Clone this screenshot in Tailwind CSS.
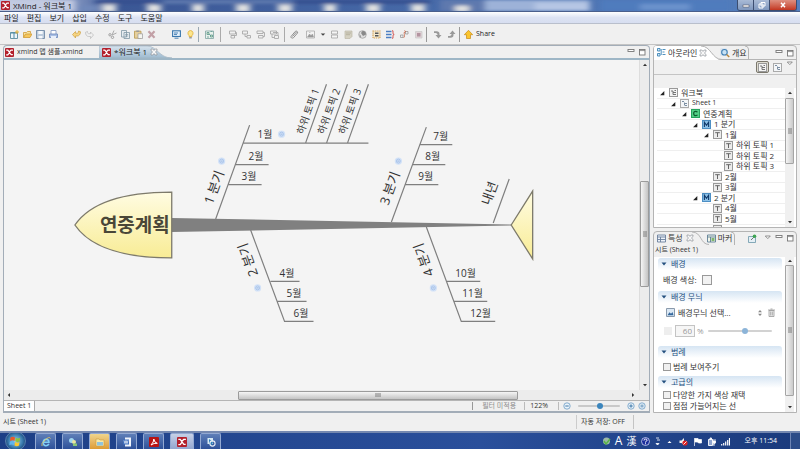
<!DOCTYPE html>
<html lang="ko">
<head>
<meta charset="utf-8">
<title>XMind - 워크북 1</title>
<script src="https://cdn.jsdelivr.net/npm/@tailwindcss/browser@4"></script>
</head>
<body class="h-screen overflow-hidden flex flex-col bg-[#f0f0f0] font-['Open_Sans','Noto_Sans_CJK_KR',sans-serif] text-[8px] leading-[10px] text-[#333] whitespace-nowrap">

<svg class="hidden" aria-hidden="true">
  <symbol id="xm" viewBox="0 0 9 9"><rect width="9" height="9" rx="1" fill="#b3202c"/><path d="M1.2 2.2h1.6L4.3 4 6 2.2h2M1.2 6.8h1.6L4.6 4.6 6.2 6.6h1.6" stroke="#fff" stroke-width="1.2" fill="none"/></symbol>
  <symbol id="close" viewBox="0 0 8 8"><path d="M1 1h1.8L4 2.4 5.2 1H7v1.2L5.6 4 7 5.8V7H5.2L4 5.6 2.8 7H1V5.8L2.4 4 1 2.2z" fill="#f8f8f8" stroke="#8a8f96" stroke-width=".7"/></symbol>
  <symbol id="min" viewBox="0 0 8 8"><rect x="1" y="1.5" width="6" height="2" fill="#fff" stroke="#777" stroke-width=".9"/></symbol>
  <symbol id="max" viewBox="0 0 8 8"><rect x="1.5" y="1.5" width="5.5" height="5.5" fill="#fff" stroke="#777" stroke-width=".9"/><path d="M1.5 2.6H7" stroke="#777" stroke-width=".8"/></symbol>
  <symbol id="menu" viewBox="0 0 8 8"><path d="M1.3 2h5L3.8 4.6z" fill="#fff" stroke="#777" stroke-width=".8"/></symbol>
  <symbol id="open" viewBox="0 0 8 8"><path d="M6.500 2.600v3.800H2.700z" fill="#222"/></symbol>
  <symbol id="topic" viewBox="0 0 9 9"><rect x=".5" y=".5" width="8" height="8" fill="#ececec" stroke="#9a9a9a"/><path d="M2.2 2.7h4.6M4.5 2.7V7" stroke="#666" stroke-width="1"/></symbol>
  <symbol id="main" viewBox="0 0 9 9"><rect x=".5" y=".5" width="8" height="8" fill="#8cc0e6" stroke="#4d8fc4"/><path d="M2.4 7V2.2l2.1 3 2.1-3V7" stroke="#123a6b" stroke-width="1.1" fill="none"/></symbol>
  <symbol id="central" viewBox="0 0 9 9"><rect x=".5" y=".5" width="8" height="8" fill="#52cf86" stroke="#25a35d"/><path d="M6.4 3.2C6 2.5 5.500 2.300 4.600 2.300 3.300 2.300 2.700 3.200 2.700 4.500s.6 2.200 1.900 2.200c.9 0 1.400-.2 1.800-.9" stroke="#0b5c2d" stroke-width="1.200" fill="none"/></symbol>
  <symbol id="book" viewBox="0 0 9 9"><rect x=".5" y=".5" width="8" height="8" fill="#f4f4f4" stroke="#999"/><path d="M2 3h2v1.500h3M4 4.500V6.500h3M5.500 2.500h1.500" stroke="#666" stroke-width=".9" fill="none"/></symbol>
  <symbol id="sheet" viewBox="0 0 9 9"><rect x=".5" y=".5" width="8" height="8" fill="#f4f6f8" stroke="#aaa"/><path d="M2 2.500h2M4.500 3.500v3M5 4.500h2M5 6.500h2" stroke="#6d8299" stroke-width=".9"/></symbol>
  <symbol id="fold" viewBox="0 0 8 8"><circle cx="4" cy="4" r="3.700" fill="#d3e2f7"/><circle cx="4" cy="4" r="2" fill="none" stroke="#9dbbe6" stroke-width=".7"/><path d="M3 4h2" stroke="#86a8da" stroke-width=".7"/></symbol>
</svg>

<!-- title bar -->
<header class="relative h-3 shrink-0 flex items-center border-b border-[#4a5f8c] bg-linear-to-r from-[#b8c2dd] from-5% via-[#3b5795] via-15% to-[#5580bf]">
  <svg class="absolute inset-0 w-full h-full" preserveAspectRatio="none" viewBox="0 0 800 12" aria-hidden="true">
    <defs><filter id="soft" x="-30%" y="-30%" width="160%" height="160%"><feGaussianBlur stdDeviation="3 1.500"/></filter></defs>
    <g filter="url(#soft)">
      <path d="M0 0h75v12H0z" fill="#c3cbe2"/><path d="M78 6h20v6H78z" fill="#7088ba"/>
      <path d="M95 0h60v4H95zM230 0h200v4H230z" fill="#344f8f"/>
      <path d="M163 0h130v4H163zM440 0h100v12H440z" fill="#5f79ae"/>
      <path d="M102 5h14v8h-14zM147 5h14v8h-14zM192 5h12v8h-12zM236 5h14v8h-14zM278 5h14v8h-14zM324 5h12v8h-12zM366 5h14v8h-14zM411 5h14v8h-14zM455 6h14v7h-14z" fill="#dfe0e0"/>
      <path d="M485 0h105v12H485z" fill="#9db2d8"/><path d="M535 3h54v8h-54z" fill="#b6c6e4"/>
      <path d="M600 0h130v12H600z" fill="#4f7bbd"/><path d="M640 4h50v7h-50z" fill="#6a92cc"/>
    </g>
  </svg>
  <div class="relative flex items-center gap-[3px] pl-px text-[#222]"><svg class="size-[9px]"><use href="#xm"/></svg><h1>XMind - 워크북 1</h1></div>
  <div class="relative ml-auto mr-[3px] h-[11px] self-start flex rounded-b-[3px] overflow-hidden border border-t-0 border-[#3c4d70]">
    <button aria-label="최소화" class="w-4 flex justify-center items-center bg-linear-to-b from-[#a9bad6] to-[#7f97be] border-r border-[#3c4d70]"><svg class="size-2" viewBox="0 0 8 8"><rect x="1" y="4" width="6" height="2" fill="#fff" stroke="#445" stroke-width=".5"/></svg></button>
    <button aria-label="이전 크기로" class="w-4 flex justify-center items-center bg-linear-to-b from-[#a9bad6] to-[#7f97be] border-r border-[#3c4d70]"><svg class="size-2" viewBox="0 0 8 8"><path d="M3 1.500h4V5H3zM1 3h4v4H1z" fill="#8fa5c9" stroke="#fff" stroke-width="1"/></svg></button>
    <button aria-label="닫기" class="w-[26px] flex justify-center items-center bg-linear-to-b from-[#dd8f80] to-[#c2341f]"><svg class="size-2" viewBox="0 0 8 8"><path d="M2 1.800l4 4.400M6 1.800L2 6.200" stroke="#fff" stroke-width="1.500"/></svg></button>
  </div>
</header>

<nav class="h-3 shrink-0 flex items-center gap-2 pl-1 border-b border-[#b9bfcc] bg-linear-to-b from-white via-[#dde3f3] via-50% to-[#d7def0] text-[#222]">
  <button>파일</button><button>편집</button><button>보기</button><button>삽입</button><button>수정</button><button>도구</button><button>도움말</button>
</nav>

<!-- toolbar -->
<div role="toolbar" class="h-[21px] shrink-0 flex items-center pl-2 border-b border-[#c4c4c4] [&_svg]:size-[9px] [&_button]:h-3 [&_button]:flex [&_button]:items-center [&_button]:justify-center">
  <div class="flex [&>button]:w-[13px]">
    <button aria-label="새로 만들기"><svg viewBox="0 0 9 9"><path d="M.5 2.500h7v6h-7z" fill="#eef5fa" stroke="#6a97a8"/><path d="M.5 3h7M4 3v5" stroke="#4e8aa3"/><path d="M7 0v4M5 2h4" stroke="#e7b43a"/></svg></button>
    <button aria-label="열기"><svg viewBox="0 0 9 9"><path d="M.5 7.500v-5h3l1-1h3v2" fill="#f9e4a0" stroke="#cf9a35" stroke-width=".8"/><path d="M.5 7.500L2.500 4H9L7 7.500z" fill="#f6c75b" stroke="#cf9a35" stroke-width=".8"/></svg></button>
    <button aria-label="저장"><svg viewBox="0 0 9 9"><path d="M.5.5h8v8h-8z" fill="#bccbdc" stroke="#7c93ad"/><path d="M2.300 1h4.400v3H2.300zM2.500 6h4v2.500h-4z" fill="#f5f8fb"/></svg></button>
    <button aria-label="인쇄"><svg viewBox="0 0 9 9"><path d="M2 4V.5h5V4" fill="#fff" stroke="#7d95c0" stroke-width=".8"/><path d="M.5 4h8v3.500h-8z" fill="#a9bfe4" stroke="#6a86ba" stroke-width=".8"/><path d="M2 6h5v2.500H2z" fill="#e9effa"/></svg></button>
  </div>
  <div class="flex ml-[10px] [&>button]:w-[13px]">
    <button aria-label="실행 취소"><svg viewBox="0 0 9 9"><path d="M.5 4.500L3.500 1.500v1.700h2C6 3.200 6.500 2.500 6.500 1l2 .8C8.500 4.500 7 6 5.300 6H3.500v2z" fill="#f6d480" stroke="#cfa040" stroke-width=".7"/></svg></button>
    <button aria-label="다시 실행"><svg viewBox="0 0 9 9"><path d="M8.500 5L5.500 2v1.700h-2C3 3.700 2.500 3 2.500 1.500l-2 .8C.5 5 2 6.500 3.700 6.500h1.800v2z" fill="#f0f0f0" stroke="#b9b9b9" stroke-width=".7"/></svg></button>
  </div>
  <div class="flex ml-[10px] [&>button]:w-[13px]">
    <button aria-label="잘라내기"><svg viewBox="0 0 9 9"><path d="M6 .5L4 5M8.500 3L4 5" stroke="#aaa" stroke-width="1"/><circle cx="2" cy="4.800" r="1.200" fill="none" stroke="#999" stroke-width=".9"/><circle cx="4.500" cy="7.300" r="1.200" fill="none" stroke="#999" stroke-width=".9"/></svg></button>
    <button aria-label="복사"><svg viewBox="0 0 9 9"><path d="M.5.5h5v6.500h-5zM3 2.500h5.500v6H3z" fill="#e7edf1" stroke="#8298a6" stroke-width=".8"/><path d="M4.200 4.500h3M4.200 6h3" stroke="#8298a6" stroke-width=".7"/></svg></button>
    <button aria-label="붙여넣기"><svg viewBox="0 0 9 9"><path d="M.5 1.200h6.500v7H.5z" fill="#e6cf9b" stroke="#b8974d" stroke-width=".8"/><path d="M2.300.5h3v1.500h-3z" fill="#999"/><path d="M4 3.800h4.500v4.700H4z" fill="#f5f5f0" stroke="#999" stroke-width=".7"/></svg></button>
    <button aria-label="삭제"><svg viewBox="0 0 9 9"><path d="M1.500 1.200l6 6.600M7.500 1.200l-6 6.600" stroke="#c2a0a6" stroke-width="2.200"/></svg></button>
  </div>
  <div class="flex ml-[11px] [&>button]:w-[14px]">
    <button aria-label="프레젠테이션"><svg viewBox="0 0 9 9"><rect x=".6" y=".8" width="7.800" height="5.700" fill="#e5f1fb" stroke="#3b77ad" stroke-width="1.100"/><path d="M2 3h4M2 4.600h3M2.500 8.200h4" stroke="#3b77ad" stroke-width=".9"/></svg></button>
    <button aria-label="브레인스토밍"><svg viewBox="0 0 9 9"><path d="M4.500.5a2.800 2.800 0 0 1 1.500 5v1H3v-1a2.800 2.800 0 0 1 1.500-5z" fill="#fce58c" stroke="#dfae38" stroke-width=".8"/><path d="M3.200 7.800h2.600" stroke="#888" stroke-width="1.200"/></svg></button>
  </div>
  <i class="w-px h-[15px] ml-px mr-1 bg-[#9aa8b4]"></i>
  <button aria-label="마인드맵" class="w-[13px]"><svg viewBox="0 0 9 9"><path d="M.5 1h8v7.500h-8z" fill="#e9f2ec" stroke="#7fa5a1" stroke-width=".8"/><path d="M2 2.500h2v2H2zM5.500 5h2v2h-2zM5.500 1.500h2M4 4l2 2M2 7h2" fill="#cde8b8" stroke="#5d9692" stroke-width=".8"/></svg></button>
  <i class="w-px h-[15px] mx-1 bg-[#aaa]"></i>
  <div class="flex [&>button]:w-[14px]">
    <button aria-label="토픽"><svg viewBox="0 0 9 9"><path d="M1.500 1h6v3h-6zM7.500 2.500H8.500V5.500H3M3 5.500h3.500v2.500H3z" fill="none" stroke="#a9a9a9" stroke-width=".9"/></svg></button>
    <button aria-label="하위 토픽"><svg viewBox="0 0 9 9"><path d="M.5 1h5v3h-5zM3 4v2.500h2M5 5.500h3.500v2.500H5z" fill="none" stroke="#a9a9a9" stroke-width=".9"/></svg></button>
    <button aria-label="이전 토픽"><svg viewBox="0 0 9 9"><path d="M1 1h6v2.500H1zM7 2.500h1.500V6.500H7M2.500 5.500H7v2.500H2.500z" fill="none" stroke="#a9a9a9" stroke-width=".9"/></svg></button>
    <button aria-label="상위 토픽"><svg viewBox="0 0 9 9"><path d="M.5 1h6v3h-6zM2 4v3.500h2.500M4.500 5.500h4v3h-4zM3 2.500h5V5" fill="none" stroke="#a9a9a9" stroke-width=".9"/></svg></button>
  </div>
  <i class="w-px h-[15px] ml-[3px] mr-[2px] bg-[#aaa]"></i>
  <button aria-label="첨부 파일" class="w-[14px]"><svg viewBox="0 0 9 9"><path d="M2.500 6.500l4-4.500M1 6.500L5.300 1.400c1-1 3 .3 2.200 1.600L3.500 7.700C2.500 8.700.2 7.700 1 6.500z" fill="none" stroke="#8e8e8e" stroke-width="1"/></svg></button>
  <button aria-label="그림" class="w-[18px]"><svg viewBox="0 0 9 9"><path d="M.5 1h8v7h-8z" fill="#f2f2f2" stroke="#aaa" stroke-width=".8"/><path d="M1.500 7l2-3 1.500 1.500L6.500 4l1 3zM3 2.500h1.500" fill="#999" stroke="#999" stroke-width=".5"/></svg></button>
  <button aria-label="그림 메뉴" class="w-[8px]"><svg viewBox="0 0 9 9"><path d="M2 3.500h5L4.500 6z" fill="#444"/></svg></button>
  <div class="flex [&>button]:w-[14px]">
    <button aria-label="레이블"><svg viewBox="0 0 9 9"><path d="M1.500 1h6v3h-6zM1.500 5h6v3h-6z" fill="#f5f5f5" stroke="#aaa" stroke-width=".9"/></svg></button>
    <button aria-label="노트"><svg viewBox="0 0 9 9"><path d="M1 1h7v5.500L6 8.500H1z" fill="#d5d1c2" stroke="#bcb8a8" stroke-width=".7"/><path d="M2 3h5M2 4.700h4" stroke="#aaa592" stroke-width=".7"/></svg></button>
    <button aria-label="하이퍼링크"><svg viewBox="0 0 9 9"><circle cx="4.500" cy="4.500" r="3.800" fill="#ddd" stroke="#999" stroke-width=".7"/><path d="M4.500 1c3 0 3.500 2 3.500 3.500L5 6 3 3zM1 4l2 2v2z" fill="#888"/></svg></button>
    <button aria-label="경계"><svg viewBox="0 0 9 9"><rect x="1" y="1" width="7" height="7" fill="#f3e9cf" stroke="#d8a55c" stroke-width="1.200" stroke-dasharray="1.300 .8"/><path d="M3 3.200h3.500M3 5.700h3.500" stroke="#555" stroke-width="1.500"/></svg></button>
    <button aria-label="요약"><svg viewBox="0 0 9 9"><path d="M0 1.500h5.500M0 4.500h5.500M0 7.500h5.500" stroke="#4b7fc4" stroke-width="1.400"/><path d="M6 .8h1v3l1.200.7L7 5.200v3H6" fill="none" stroke="#cf4a4a" stroke-width=".9"/></svg></button>
    <button aria-label="관계"><svg viewBox="0 0 9 9"><path d="M.5 5h2.500v2.500H.5zM5.500 1.500H8V4H5.500z" fill="#eee" stroke="#999" stroke-width=".8"/><path d="M3.500 7.500C6 7.500 2.500 2 5.500 1.500M4.500.5l1.200 1-1.200 1" fill="none" stroke="#cc6a4a" stroke-width=".9"/></svg></button>
    <button aria-label="시트"><svg viewBox="0 0 9 9"><path d="M1.500 1.500h6.500v6.500H1.500z" fill="#e0d2d6" stroke="#ccc" stroke-width=".8"/><path d="M3 3h3.500v3.500H3z" fill="#b394a0"/></svg></button>
  </div>
  <i class="w-px h-[15px] ml-px mr-[3px] bg-[#999]"></i>
  <div class="flex [&>button]:w-[14px]">
    <button aria-label="드릴 다운"><svg viewBox="0 0 9 9"><path d="M1 1.200h2.500c2 0 3 1 3 2.800v1h2L5.500 8.500 2.500 5h2C4.500 3.500 4 3 1 3z" fill="#999"/></svg></button>
    <button aria-label="드릴 업"><svg viewBox="0 0 9 9"><path d="M1 7.800h2.500c2 0 3-1 3-2.800V4h2L5.500.5 2.500 4h2C4.500 5.500 4 6 1 6z" fill="#999"/></svg></button>
  </div>
  <i class="w-px h-[15px] ml-px mr-1 bg-[#999]"></i>
  <button class="gap-[3px] text-[7px] text-[#222]"><svg viewBox="0 0 9 9"><path d="M4.500.3L8.700 4.700H6.500V8.500h-4V4.700H.3z" fill="#fbc52e" stroke="#c98a15" stroke-width=".7"/></svg>Share</button>
</div>

<main class="flex-1 min-h-0 flex gap-[3px] px-[3px]">
  <!-- editor -->
  <section class="flex-1 min-w-0 flex flex-col rounded-t-[4px] border border-[#a3adb8] border-b-2">
    <div class="h-[14px] shrink-0 flex items-center border-b-2 border-[#9eb6c6] pl-px">
      <button class="flex items-center gap-[3px] w-[94px] text-[7px]"><svg class="size-[9px]"><use href="#xm"/></svg>xmind 맵 샘플.xmind</button>
      <div class="relative w-[74px] h-3 flex items-center pl-[3px] gap-[3px]">
        <svg class="absolute inset-0 w-full h-full" viewBox="0 0 74 12" preserveAspectRatio="none" aria-hidden="true"><defs><linearGradient id="tabg" x2="0" y2="1"><stop stop-color="#d7e3ee"/><stop offset="1" stop-color="#9ebbd0"/></linearGradient></defs><path d="M0 12V2Q0 0 2 0H48C58 0 60 12 73 12z" fill="url(#tabg)" stroke="#a3b4c2" stroke-width=".7"/></svg>
        <button class="relative flex items-center gap-[3px] text-[#222]"><svg class="size-[9px]"><use href="#xm"/></svg>*워크북 1</button>
        <button aria-label="탭 닫기" class="relative"><svg class="size-2"><use href="#close"/></svg></button>
      </div>
      <div class="ml-auto mr-[3px] flex gap-[3px]"><button aria-label="최소화"><svg class="size-2"><use href="#min"/></svg></button><button aria-label="최대화"><svg class="size-2"><use href="#max"/></svg></button></div>
    </div>
    <div class="flex-1 min-h-0 flex">
      <svg class="flex-1 min-w-0 h-full bg-[#f4f4f4]" viewBox="3 60 636 330" role="img" aria-label="연중계획" fill="#333" font-size="10">
        <defs>
          <linearGradient id="yel" x2="0" y2="1"><stop stop-color="#fffce2"/><stop offset="1" stop-color="#f8ec95"/></linearGradient>
        </defs>
        <path d="M171 218L511 224.500V225.500L171 232z" fill="#808080"/>
        <g fill="url(#yel)" stroke="#7d7a6b" stroke-width="1.300"><path d="M74 225C89 203 122 192 171 192V258C122 258 89 247 74 225z"/><path d="M511 225L532.500 191V259z"/></g>
        <g fill="none" stroke="#7f7f7f" stroke-width="1.200">
          <path d="M215 219L249 125M243 143H368M235 164.500H268M228 184.500H261M305 143L326 84M326 143L347 84M347 143L368 84"/>
          <path d="M250 230L284 321.500H313M270 281.500H299M277 301.500H306"/>
          <path d="M391 222L426 127M419 144.500H452M412 164.500H445M405 184.500H438M493 223L509 179"/>
          <path d="M426 227L461 321.500H495M446 281.500H480M453 301.500H487"/>
        </g>
        <text x="134" y="232" font-size="19" font-weight="700" text-anchor="middle" fill="#4a4738">연중계획</text>
        <text x="257" y="138">1월</text><text x="248" y="160">2월</text><text x="241" y="180">3월</text>
        <text x="279" y="277">4월</text><text x="286" y="297">5월</text><text x="293" y="317">6월</text>
        <text x="433" y="140">7월</text><text x="425" y="160">8월</text><text x="418" y="180">9월</text>
        <text x="455" y="277">10월</text><text x="462" y="297">11월</text><text x="470" y="317">12월</text>
        <g text-anchor="middle">
          <text transform="translate(307 111) rotate(-70)" y="4">하위 토픽 1</text>
          <text transform="translate(328 111) rotate(-70)" y="4">하위 토픽 2</text>
          <text transform="translate(349 111) rotate(-70)" y="4">하위 토픽 3</text>
          <g font-size="13">
            <text transform="translate(213 187) rotate(-70)" y="5">1 분기</text>
            <text transform="translate(247 260) rotate(-110)" y="5">2 분기</text>
            <text transform="translate(389 188) rotate(-70)" y="5">3 분기</text>
            <text transform="translate(423 260) rotate(-110)" y="5">4 분기</text>
            <text transform="translate(489 193) rotate(-70)" y="5">내년</text>
          </g>
        </g>
        <use href="#fold" x="217" y="157" width="8" height="8"/><use href="#fold" x="277" y="130" width="8" height="8"/><use href="#fold" x="253" y="284" width="8" height="8"/><use href="#fold" x="394" y="157" width="8" height="8"/><use href="#fold" x="429" y="284" width="8" height="8"/>
      </svg>
      <div class="w-[10px] shrink-0 flex flex-col items-center bg-[#ececec] border-l border-[#ddd]">
        <svg class="size-2 my-px" viewBox="0 0 8 8"><path d="M2 5h4L4 2.800z" fill="#333"/></svg>
        <i class="basis-[111px]"></i>
        <span class="h-[106px] w-[9px] flex items-center justify-center rounded-[1px] border border-[#9b9b9b] bg-linear-to-r from-[#f5f5f5] to-[#c4c4c4]"><svg class="size-[6px]" viewBox="0 0 6 6"><path d="M1 1h4M1 3h4M1 5h4" stroke="#666" stroke-width=".8"/></svg></span>
        <svg class="size-2 mt-auto mb-px" viewBox="0 0 8 8"><path d="M2 3h4L4 5.200z" fill="#333"/></svg>
      </div>
    </div>
    <div class="h-[10px] shrink-0 flex items-center bg-[#ececec]">
      <svg class="size-2 ml-px" viewBox="0 0 8 8"><path d="M5 2v4L2.800 4z" fill="#333"/></svg>
      <i class="basis-[225px]"></i>
      <span class="w-[280px] h-[9px] flex items-center justify-center rounded-[1px] border border-[#9b9b9b] bg-linear-to-b from-[#f5f5f5] to-[#c4c4c4]"><svg class="size-[6px]" viewBox="0 0 6 6"><path d="M1 1v4M3 1v4M5 1v4" stroke="#666" stroke-width=".8"/></svg></span>
      <svg class="size-2 ml-auto mr-3" viewBox="0 0 8 8"><path d="M3 2v4l2.200-2z" fill="#333"/></svg>
    </div>
    <div class="h-[11px] shrink-0 flex items-center border-t border-[#b5b5b5] text-[7px]">
      <button class="h-full bg-white border-r border-[#aaa] px-[3px]">Sheet 1</button>
      <i class="ml-auto w-px h-2 bg-[#999] mr-[9px]"></i>
      <span class="text-[#8c8c8c]">필터 미적용</span>
      <i class="w-px h-2 bg-[#bbb] ml-2 mr-[5px]"></i>
      <span>122%</span>
      <i class="w-px h-2 bg-[#bbb] ml-[10px] mr-1"></i>
      <button aria-label="축소"><svg class="size-2" viewBox="0 0 8 8"><circle cx="4" cy="4" r="3.200" fill="#eaf3fa" stroke="#6b9cc4" stroke-width=".8"/><path d="M2.300 4h3.400" stroke="#3f78a8"/></svg></button>
      <input type="range" aria-label="확대 비율" min="0" max="100" value="53" class="appearance-none mx-[7px] w-[42px] h-[2px] bg-[#c9c9c9] rounded [&::-webkit-slider-thumb]:appearance-none [&::-webkit-slider-thumb]:size-[6px] [&::-webkit-slider-thumb]:rounded-full [&::-webkit-slider-thumb]:bg-[#3c86bd]">
      <button aria-label="확대"><svg class="size-2" viewBox="0 0 8 8"><circle cx="4" cy="4" r="3.200" fill="#eaf3fa" stroke="#6b9cc4" stroke-width=".8"/><path d="M2.300 4h3.400M4 2.300v3.400" stroke="#3f78a8"/></svg></button>
      <button aria-label="실제 크기" class="ml-[3px] mr-[3px]"><svg class="size-2" viewBox="0 0 8 8"><circle cx="4" cy="4" r="3.200" fill="#eaf3fa" stroke="#6b9cc4" stroke-width=".8"/><path d="M2.500 3.200h3M2.500 4.800h3" stroke="#3f78a8" stroke-width=".8"/></svg></button>
    </div>
  </section>

  <aside class="w-[144px] shrink-0 flex flex-col gap-[3px]">
    <!-- outline -->
    <section class="flex-1 min-h-0 flex flex-col rounded-t-[4px] border border-[#b4b4b4] bg-[#f0f0f0]">
      <div class="relative h-[14px] shrink-0 flex items-center pl-[3px] border-b border-[#b4b4b4]">
        <svg class="absolute left-0 top-0 h-[14px] w-[95px]" viewBox="0 0 95 14" preserveAspectRatio="none" aria-hidden="true"><path d="M0 14V2Q0 0 2 0H47C57 0 58 14 68 14z" fill="#fff"/><path d="M47 0C57 0 58 13.500 68 13.500M94.500 14V3Q94 0 91 0" fill="none" stroke="#b4b4b4"/></svg>
        <h2 class="relative flex items-center gap-[2px] w-[41px]"><svg class="size-[9px]" viewBox="0 0 9 9"><path d="M.5.5h2.500v2.500H.5zM.5 5.500h2.500v2.500H.5zM5.500 1.500h3M5.500 4h2M5.500 6.500h3M4.200 1v6" fill="#d9ecf8" stroke="#3d86b8" stroke-width=".9"/></svg>아웃라인</h2>
        <button aria-label="아웃라인 닫기" class="relative ml-px"><svg class="size-2"><use href="#close"/></svg></button>
        <button class="relative flex items-center gap-[2px] ml-[13px]"><svg class="size-[10px]" viewBox="0 0 9 9"><path d="M1 0h5v7H0V1z" fill="#dfe6ee"/><circle cx="4" cy="3.800" r="2.500" fill="#c8e2f4" stroke="#3f7fb4"/><path d="M6 5.800L8.300 8.200" stroke="#b8863c" stroke-width="1.300"/></svg>개요</button>
        <div class="ml-auto mr-[2px] flex gap-[3px]"><button aria-label="최소화"><svg class="size-2"><use href="#min"/></svg></button><button aria-label="최대화"><svg class="size-2"><use href="#max"/></svg></button></div>
      </div>
      <div class="h-[15px] shrink-0 flex items-center justify-end gap-1 pr-[2px] border-b border-[#c4c4c4]">
        <button aria-label="통합 문서 보기" class="w-[13px] h-3 flex items-center justify-center border border-[#7a776c] rounded-[2px] bg-[#dedbd0]"><svg class="size-[9px]"><use href="#book"/></svg></button>
        <button aria-label="시트 보기"><svg class="size-[9px]"><use href="#sheet"/></svg></button>
        <button aria-label="보기 메뉴" class="self-start"><svg class="size-2"><use href="#menu"/></svg></button>
      </div>
      <div class="mt-[13px] flex-1 min-h-0 flex bg-white overflow-hidden">
        <ul role="tree" class="flex-1 h-[147px] grid auto-rows-fr divide-y divide-[#efefef] pl-[3px] [&>li]:flex [&>li]:items-center [&>li]:gap-[3px] [&_svg]:size-[9px] [&_svg]:shrink-0">
          <li role="treeitem" class="pl-0"><svg><use href="#open"/></svg><svg><use href="#book"/></svg>워크북</li>
          <li role="treeitem" class="pl-[11px]"><svg><use href="#open"/></svg><svg><use href="#sheet"/></svg><span class="text-[7px]">Sheet 1</span></li>
          <li role="treeitem" class="pl-[22px]"><svg><use href="#open"/></svg><svg><use href="#central"/></svg>연중계획</li>
          <li role="treeitem" class="pl-[33px]"><svg><use href="#open"/></svg><svg><use href="#main"/></svg>1 분기</li>
          <li role="treeitem" class="pl-[44px]"><svg><use href="#open"/></svg><svg><use href="#topic"/></svg>1월</li>
          <li role="treeitem" class="pl-[67px]"><svg><use href="#topic"/></svg>하위 토픽 1</li>
          <li role="treeitem" class="pl-[67px]"><svg><use href="#topic"/></svg>하위 토픽 2</li>
          <li role="treeitem" class="pl-[67px]"><svg><use href="#topic"/></svg>하위 토픽 3</li>
          <li role="treeitem" class="pl-[56px]"><svg><use href="#topic"/></svg>2월</li>
          <li role="treeitem" class="pl-[56px]"><svg><use href="#topic"/></svg>3월</li>
          <li role="treeitem" class="pl-[33px]"><svg><use href="#open"/></svg><svg><use href="#main"/></svg>2 분기</li>
          <li role="treeitem" class="pl-[56px]"><svg><use href="#topic"/></svg>4월</li>
          <li role="treeitem" class="pl-[56px]"><svg><use href="#topic"/></svg>5월</li>
          <li role="treeitem" class="pl-[56px]"><svg><use href="#topic"/></svg></li>
        </ul>
        <div class="w-[9px] mr-[2px] shrink-0 flex flex-col items-center bg-[#f0f0f0]">
          <svg class="size-2 my-px" viewBox="0 0 8 8"><path d="M2 5h4L4 2.800z" fill="#333"/></svg>
          <span class="h-[66px] w-full flex items-center justify-center rounded-[1px] border border-[#a5a5a5] bg-linear-to-r from-[#f5f5f5] to-[#cacaca]"><svg class="size-[6px]" viewBox="0 0 6 6"><path d="M1 1h4M1 3h4M1 5h4" stroke="#666" stroke-width=".8"/></svg></span>
          <svg class="size-2 mt-auto mb-px" viewBox="0 0 8 8"><path d="M2 3h4L4 5.200z" fill="#333"/></svg>
        </div>
      </div>
    </section>

    <!-- properties -->
    <section class="flex-1 min-h-0 flex flex-col rounded-t-[4px] border border-[#b4b4b4] bg-[#f0f0f0]">
      <div class="relative h-[13px] shrink-0 flex items-center pl-[3px]">
        <svg class="absolute left-0 top-0 h-[13px] w-[81px]" viewBox="0 0 81 13" preserveAspectRatio="none" aria-hidden="true"><path d="M38 0C48 0 46 12.500 55 12.500M80.500 13V3Q80 0 77 0" fill="none" stroke="#b4b4b4"/></svg>
        <h2 class="relative flex items-center gap-[2px]"><svg class="size-[9px]" viewBox="0 0 9 9"><path d="M.5 1h8v7h-8zM.5 3h8M.5 5.500h8M3.500 3v5" fill="#eef3fa" stroke="#6a7f9c" stroke-width=".9"/></svg>특성</h2>
        <button aria-label="특성 닫기" class="relative ml-[3px]"><svg class="size-2"><use href="#close"/></svg></button>
        <button class="relative flex items-center gap-[2px] ml-[13px]"><svg class="size-[9px]" viewBox="0 0 9 9"><path d="M.5 1h8v7h-8zM.5 3h8M3.500 3v5" fill="#f2f6ea" stroke="#5f7f96" stroke-width=".9"/><path d="M4.500 4h3v3h-3z" fill="#7fb56f"/></svg>마커</button>
        <div class="ml-auto mr-[2px] flex gap-[3px]"><button aria-label="새 보기 고정" class="mr-1"><svg class="size-[9px]" viewBox="0 0 9 9"><path d="M.5 2.500h7v6h-7z" fill="#e5eff5" stroke="#6a97a8" stroke-width=".8"/><path d="M3 6L6 3" stroke="#555" stroke-width=".8"/><circle cx="6.500" cy="2.300" r="1.800" fill="#3fa552"/></svg></button><button aria-label="보기 메뉴"><svg class="size-2"><use href="#menu"/></svg></button><button aria-label="최소화"><svg class="size-2"><use href="#min"/></svg></button><button aria-label="최대화"><svg class="size-2"><use href="#max"/></svg></button></div>
      </div>
      <p class="h-[12px] shrink-0 pl-px text-[7px]">시트 (Sheet 1)</p>
      <div class="flex-1 min-h-0 flex overflow-hidden bg-white">
        <div class="flex-1 pt-px pl-1 pr-[3px] [&>h3]:h-3 [&>h3]:flex [&>h3]:items-center [&>h3]:gap-1 [&>h3]:pl-[3px] [&>h3]:rounded-t-[3px] [&>h3]:bg-linear-to-b [&>h3]:from-[#d6e5f3] [&>h3]:to-white [&>h3]:text-[#24507f] [&>h3>svg]:size-[6px]">
          <h3><svg viewBox="0 0 6 6"><path d="M.5 1.500h5L3 4.500z" fill="#24507f"/></svg>배경</h3>
          <div class="h-[21px] flex items-center gap-[5px] pl-[5px]"><span>배경 색상:</span><button aria-label="배경 색상" class="size-[10px] border border-[#999] bg-[#f2f2f2]"></button></div>
          <h3><svg viewBox="0 0 6 6"><path d="M.5 1.500h5L3 4.500z" fill="#24507f"/></svg>배경 무늬</h3>
          <div class="h-5 flex items-center gap-[3px] pl-2">
            <button class="flex-1 flex items-center gap-[3px]"><svg class="size-[9px]" viewBox="0 0 9 9"><path d="M.5.5h8v8h-8z" fill="#dbe8f4" stroke="#8a9aac"/><path d="M1.500 7.200l2-3 1.500 1.500L6.500 4l1 3.200z" fill="#35689d"/></svg>배경무늬 선택...<svg class="size-2 ml-auto" viewBox="0 0 8 8"><path d="M2 3.200h4L4 1zM2 4.800h4L4 7z" fill="#888"/></svg></button>
            <button aria-label="삭제" class="mr-[6px]"><svg class="size-[9px]" viewBox="0 0 9 9"><path d="M2 2.500h5v6H2zM1 2h7M3.500 1h2M3.700 3.500v4M5.300 3.500v4" fill="#eee" stroke="#999" stroke-width=".8"/></svg></button>
          </div>
          <div class="h-4 flex items-center pl-[6px] text-[#999]">
            <i class="size-2 bg-[#eee] mr-[3px]"></i>
            <input type="text" value="60" disabled aria-label="불투명도" class="w-5 h-3 border border-[#c4c4c4] bg-[#f6f6f6] text-right pr-[2px]"><span class="ml-[2px]">%</span>
            <input type="range" aria-label="불투명도 조절" min="0" max="100" value="60" class="appearance-none ml-1 w-[64px] h-[2px] bg-[#d2d2d2] rounded [&::-webkit-slider-thumb]:appearance-none [&::-webkit-slider-thumb]:size-[6px] [&::-webkit-slider-thumb]:rounded-full [&::-webkit-slider-thumb]:bg-[#8cb4d8]">
          </div>
          <h3 class="mt-[7px]"><svg viewBox="0 0 6 6"><path d="M.5 1.500h5L3 4.500z" fill="#24507f"/></svg>범례</h3>
          <label class="h-[18px] flex items-center gap-[2px] pl-[5px]"><input type="checkbox" class="appearance-none size-2 border border-[#999] bg-[#f0f0f0]">범례 보여주기</label>
          <h3><svg viewBox="0 0 6 6"><path d="M.5 1.500h5L3 4.500z" fill="#24507f"/></svg>고급의</h3>
          <label class="mt-[2px] h-[11px] flex items-center gap-[2px] pl-[5px]"><input type="checkbox" class="appearance-none size-2 border border-[#999] bg-[#f0f0f0]">다양한 가지 색상 재택</label>
          <label class="h-[11px] flex items-center gap-[2px] pl-[5px]"><input type="checkbox" class="appearance-none size-2 border border-[#999] bg-[#f0f0f0]">점점 가늘어지는 선</label>
        </div>
        <div class="w-[9px] mr-[2px] shrink-0 flex flex-col items-center bg-[#f0f0f0]">
          <svg class="size-2 shrink-0" viewBox="0 0 8 8"><path d="M2 5h4L4 2.800z" fill="#333"/></svg>
          <span class="h-[131px] w-full flex items-center justify-center rounded-[1px] border border-[#a5a5a5] bg-linear-to-r from-[#f5f5f5] to-[#cacaca]"><svg class="size-[6px]" viewBox="0 0 6 6"><path d="M1 1h4M1 3h4M1 5h4" stroke="#666" stroke-width=".8"/></svg></span>
          <svg class="size-2 shrink-0 mt-auto mb-px" viewBox="0 0 8 8"><path d="M2 3h4L4 5.200z" fill="#333"/></svg>
        </div>
      </div>
    </section>
  </aside>
</main>

<div role="status" class="h-[18px] shrink-0 flex items-center pl-[3px] pr-[166px] text-[7px]">
  <span>시트 (Sheet 1)</span>
  <span class="ml-auto h-[14px] w-[58px] flex items-center border-l border-[#ccc] border-r border-r-[#c4c4c4] pl-1">자동 저장: OFF</span>
</div>

<!-- taskbar -->
<footer class="h-[18px] shrink-0 flex items-center pl-[5px] border-t-2 border-[#7488b0] bg-linear-to-r from-[#1d3f86] via-[#2a4f9b] via-60% to-[#1a3a7c] text-white [&>button]:shrink-0">
  <button aria-label="시작" class="mr-[9px]"><svg class="w-[21px] h-[17px]" viewBox="0 0 21 17"><defs><radialGradient id="orb"><stop stop-color="#9fd3ee"/><stop offset=".7" stop-color="#3b7cae"/><stop offset="1" stop-color="#1f4d80"/></radialGradient></defs><ellipse cx="10.500" cy="8" rx="10" ry="9.500" fill="url(#orb)" stroke="#7fa6c9" stroke-width=".6"/><path d="M5.500 4.500q2.300-1.500 4.500 0L9.500 8q-2-1.500-4.500 0z" fill="#ea5b28"/><path d="M10.700 4.700q2.300 1.500 4.500 0l-.5 3.500q-2.200 1.500-4.500 0z" fill="#8cc63e"/><path d="M4.800 8.800q2.300-1.500 4.500 0l-.5 3.500q-2-1.500-4.500 0z" fill="#5fb5ee"/><path d="M10 9q2.300 1.500 4.500 0l-.5 3.500q-2.200 1.500-4.500 0z" fill="#fbc92f"/></svg></button>
  <div class="flex self-stretch gap-[6px] [&>button]:w-[21px] [&>button]:flex [&>button]:items-center [&>button]:justify-center [&>button]:border [&>button]:border-[#93a9d2] [&>button]:border-b-0 [&>button]:rounded-t-[2px] [&_svg]:size-[10px]">
    <button aria-label="Internet Explorer" class="bg-linear-to-b from-[#5f7fb8] to-[#2e5199]"><svg viewBox="0 0 10 10"><path d="M8 7Q6.500 9 4.500 8.700 2 8 2.200 5.200 2.500 2.500 5 2.300 8 2.500 8 5.300H2.500" fill="none" stroke="#7fcdf5" stroke-width="1.500"/><path d="M1 9Q-.5 7 4 3T9.500 1.500" fill="none" stroke="#f0cf5b" stroke-width=".8"/></svg></button>
    <button aria-label="메신저" class="bg-linear-to-b from-[#5f7fb8] to-[#2e5199]"><svg viewBox="0 0 10 10"><circle cx="3.500" cy="3.500" r="2.500" fill="#9ed6f0"/><circle cx="6" cy="5" r="2" fill="#e8e4a0"/><path d="M5 6.500h4V9H5z" fill="#8ac776"/></svg></button>
    <button aria-label="탐색기" class="bg-linear-to-b from-[#f0d58c] to-[#dd9c33]"><svg viewBox="0 0 10 10"><path d="M1 2h3l1 1h4v6H1z" fill="#f9e9a6" stroke="#c99c3c" stroke-width=".6"/><path d="M2 5h6v3.500H2z" fill="#8fc4de"/></svg></button>
    <button aria-label="Word" class="bg-linear-to-b from-[#5f7fb8] to-[#2e5199]"><svg viewBox="0 0 10 10"><path d="M3 .5h6v9H3z" fill="#eef3fb"/><path d="M1 2.500h6v5H1z" fill="#3f6fbd"/><path d="M2 3.500l1 3 1-3 1 3 1-3M7.500 3h1M7.500 5h1M7.500 7h1" fill="none" stroke="#fff" stroke-width=".7"/></svg></button>
    <button aria-label="Adobe Reader" class="bg-linear-to-b from-[#5f7fb8] to-[#2e5199]"><svg viewBox="0 0 10 10"><rect width="10" height="10" rx="1" fill="#b81414"/><path d="M2 8Q5 5 4.800 2 5.500 6 8.300 6.300 5 5.800 2 8z" fill="none" stroke="#fff" stroke-width="1"/></svg></button>
    <button aria-label="XMind" class="bg-linear-to-b from-[#c6d0e6] to-[#93a6cf] min-w-6"><svg><use href="#xm"/></svg></button>
    <button aria-label="XMind 도우미" class="bg-linear-to-b from-[#5f7fb8] to-[#2e5199]"><svg viewBox="0 0 10 10"><path d="M1.500 1h5.500v6H1.500z" fill="#d7eaf5"/><path d="M3 2l4 3-1.500 4L3 6z" fill="#2f7fb8"/><circle cx="6.500" cy="6.500" r="2.600" fill="none" stroke="#e9eff5" stroke-width="1.100"/></svg></button>
  </div>
  <div class="ml-auto flex items-center gap-[5px] mr-[13px] [&_svg]:h-[9px] [&_svg]:w-[9px]">
    <svg viewBox="0 0 9 9"><circle cx="4.500" cy="4" r="3.500" fill="#9db8a8"/><path d="M2 4l2 3 4-5" fill="none" stroke="#59b548" stroke-width="1.500"/></svg>
    <span class="text-[12px] leading-3 -mx-px">A</span>
    <span class="text-[10px] leading-3">漢</span>
    <svg viewBox="0 0 9 9"><circle cx="4.500" cy="4.500" r="4" fill="#1c2f9c" stroke="#e6ecff" stroke-width=".7"/><path d="M3 3.500q0-1.500 1.500-1.500T6 3.300Q6 4.200 4.500 4.800v.7M4.500 6.300v1" fill="none" stroke="#fff"/></svg>
    <svg viewBox="0 0 9 9" class="-mx-[2px]"><path d="M3 1h3M4 3h3M3 6.500h3L4.500 8z" fill="#fff" stroke="#fff" stroke-width=".8"/></svg>
    <svg viewBox="0 0 9 9"><path d="M2.500 6h4l-2-2z" fill="#fff"/></svg>
    <svg viewBox="0 0 9 9"><path d="M.5 3.500h2L5 1v7L2.500 6h-2z" fill="#eee"/><circle cx="6" cy="6" r="2.600" fill="#d22"/><path d="M4.500 7.500l3-3" stroke="#fff" stroke-width=".9"/></svg>
    <svg viewBox="0 0 9 9"><path d="M1.500 1v8M2 1.500h3l1 1h2.500V6H5.500L4.500 5H2z" fill="#fff" stroke="#fff" stroke-width=".7"/></svg>
    <svg viewBox="0 0 9 9"><path d="M1.500 2.500h4v6h-4zM3 1h1.500v1H3z" fill="#8fa5d0" stroke="#fff" stroke-width=".9"/><path d="M6 2v2M8 2v2M5.500 4h3v2l-1.500 1v2" fill="#fff" stroke="#fff" stroke-width=".8"/></svg>
    <svg viewBox="0 0 9 9"><path d="M.7 8.500V7M2.700 8.500V6M4.700 8.500V4.500M6.700 8.500V3M8.500 8.500V1" stroke="#fff" stroke-width="1.200"/></svg>
    <time class="ml-[9px] text-[7px]">오후 11:54</time>
  </div>
  <button aria-label="바탕 화면 보기" class="w-[10px] self-stretch border-l border-[#6d84b3] bg-[#2c4c88]"></button>
</footer>
</body>
</html>
